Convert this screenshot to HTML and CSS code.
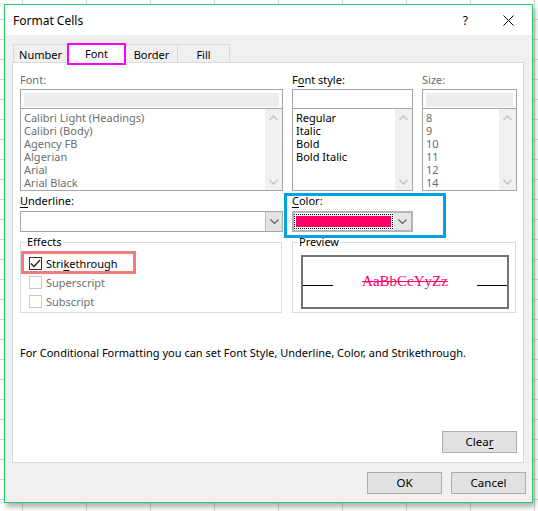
FILE: index.html
```html
<!DOCTYPE html>
<html>
<head>
<meta charset="utf-8">
<title>Format Cells</title>
<link rel="stylesheet" href="styles.css">
</head>
<body>
<div class="dialog">
  <div class="titlebar">
    <span class="title">Format Cells</span>
    <span class="help">?</span>
    <svg class="close" width="11" height="11" viewBox="0 0 11 11"><path d="M0.5 0.5 L10.5 10.5 M10.5 0.5 L0.5 10.5" stroke="#000" stroke-width="1" fill="none"/></svg>
  </div>
  <div class="tabs">
    <div class="tab tab-number">Number</div>
    <div class="tab tab-font active">Font</div>
    <div class="tab tab-border">Border</div>
    <div class="tab tab-fill">Fill</div>
  </div>
  <div class="panel">
    <div class="topgrid">
      <div class="col">
        <div class="label dis">Font:</div>
        <div class="edit dis"><div class="edit-fill"></div></div>
        <div class="list">
          <div class="items dis">
            <div>Calibri Light (Headings)</div>
            <div>Calibri (Body)</div>
            <div>Agency FB</div>
            <div>Algerian</div>
            <div>Arial</div>
            <div>Arial Black</div>
          </div>
          <div class="sb">
            <div class="sb-btn"><svg width="9" height="6" viewBox="0 0 9 6"><polyline points="0.5,5 4.5,1 8.5,5" fill="none" stroke="#c4c4c4" stroke-width="1.3"/></svg></div>
            <div class="sb-btn"><svg width="9" height="6" viewBox="0 0 9 6"><polyline points="0.5,1 4.5,5 8.5,1" fill="none" stroke="#c4c4c4" stroke-width="1.3"/></svg></div>
          </div>
        </div>
      </div>
      <div class="col">
        <div class="label">F<u>o</u>nt style:</div>
        <div class="edit"></div>
        <div class="list">
          <div class="items">
            <div>Regular</div>
            <div>Italic</div>
            <div>Bold</div>
            <div>Bold Italic</div>
          </div>
          <div class="sb">
            <div class="sb-btn"><svg width="9" height="6" viewBox="0 0 9 6"><polyline points="0.5,5 4.5,1 8.5,5" fill="none" stroke="#c4c4c4" stroke-width="1.3"/></svg></div>
            <div class="sb-btn"><svg width="9" height="6" viewBox="0 0 9 6"><polyline points="0.5,1 4.5,5 8.5,1" fill="none" stroke="#c4c4c4" stroke-width="1.3"/></svg></div>
          </div>
        </div>
      </div>
      <div class="col">
        <div class="label dis">Size:</div>
        <div class="edit dis"><div class="edit-fill"></div></div>
        <div class="list">
          <div class="items dis">
            <div>8</div>
            <div>9</div>
            <div>10</div>
            <div>11</div>
            <div>12</div>
            <div>14</div>
          </div>
          <div class="sb">
            <div class="sb-btn"><svg width="9" height="6" viewBox="0 0 9 6"><polyline points="0.5,5 4.5,1 8.5,5" fill="none" stroke="#c4c4c4" stroke-width="1.3"/></svg></div>
            <div class="sb-btn"><svg width="9" height="6" viewBox="0 0 9 6"><polyline points="0.5,1 4.5,5 8.5,1" fill="none" stroke="#c4c4c4" stroke-width="1.3"/></svg></div>
          </div>
        </div>
      </div>
    </div>

    <div class="midgrid">
      <div class="col">
        <div class="label2"><u>U</u>nderline:</div>
        <div class="combo">
          <div class="combo-value"></div>
          <div class="combo-btn"><svg width="9" height="5" viewBox="0 0 9 5"><polyline points="0.5,0.5 4.5,4.5 8.5,0.5" fill="none" stroke="#606060" stroke-width="1.2"/></svg></div>
        </div>
      </div>
      <div class="col color-group">
        <div class="label2"><u>C</u>olor:</div>
        <div class="combo combo-color">
          <div class="combo-value"><div class="focus"><div class="swatch"></div></div></div>
          <div class="combo-btn"><svg width="9" height="5" viewBox="0 0 9 5"><polyline points="0.5,0.5 4.5,4.5 8.5,0.5" fill="none" stroke="#606060" stroke-width="1.2"/></svg></div>
        </div>
      </div>
    </div>

    <div class="groupgrid">
      <fieldset class="group effects">
        <legend>Effects</legend>
        <div class="check strike">
          <span class="box checked"><svg width="11" height="11" viewBox="0 0 11 11"><polyline points="1,5.5 4,8.5 10,2" fill="none" stroke="#222" stroke-width="1.3"/></svg></span>
          <span class="check-label">Stri<u>k</u>ethrough</span>
        </div>
        <div class="check dis">
          <span class="box"></span>
          <span class="check-label">Superscript</span>
        </div>
        <div class="check dis">
          <span class="box"></span>
          <span class="check-label">Subscript</span>
        </div>
      </fieldset>
      <fieldset class="group preview">
        <legend>Preview</legend>
        <div class="pv-box">
          <div class="pv-line"></div>
          <span class="pv-text">AaBbCcYyZz</span>
          <div class="pv-line"></div>
        </div>
      </fieldset>
    </div>

    <p class="note">For Conditional Formatting you can set Font Style, Underline, Color, and Strikethrough.</p>

    <button class="btn btn-clear">Clea<u>r</u></button>
  </div>
  <div class="footer">
    <button class="btn">OK</button>
    <button class="btn">Cancel</button>
  </div>
</div>
</body>
</html>
```

FILE: styles.css
```css
*, *::before, *::after { box-sizing: border-box; }
html, body { margin: 0; height: 100%; }
body {
  background-color: #ffffff;
  background-image:
    linear-gradient(#d6d6d6 1px, transparent 1px),
    linear-gradient(90deg, #d6d6d6 1px, transparent 1px);
  background-size: 64px 20px;
  background-position: 22px 19px;
  font-family: "Noto Sans", "Open Sans", sans-serif;
  font-size: 11px;
  color: #000;
  padding: 4px 0 0 4px;
  overflow: hidden;
}

.dialog {
  width: 529px;
  height: 499px;
  border: 1px solid #21cc6a;
  background: #f0f0f0;
  box-shadow: 2px 4px 5px rgba(0, 0, 0, 0.3);
  display: flex;
  flex-direction: column;
}

.titlebar {
  height: 30px;
  flex: none;
  background: #fff;
  display: flex;
  align-items: center;
  padding: 1px 18px 0 8px;
}
.title { flex: 1; font-size: 12px; }
.help { margin-right: 35px; font-size: 12px; }
.close { display: block; }

.tabs {
  display: flex;
  height: 18px;
  margin: 9px 0 0 8px;
  flex: none;
}
.tab {
  height: 18px;
  border: 1px solid #d9d9d9;
  border-bottom: none;
  background: #f0f0f0;
  text-align: center;
  padding-top: 2px;
  line-height: 15px;
  margin-left: -1px;
}
.tab-number { width: 55px; margin-left: 0; }
.tab-font {
  width: 59px;
  height: 22px;
  margin-top: -1px;
  border: 2px solid #ff00ff;
  background: #fff;
  padding-top: 1px;
  position: relative;
  z-index: 2;
}
.tab-border { width: 53px; }
.tab-fill { width: 53px; }

.panel {
  flex: none;
  margin-left: 7px;
  width: 512px;
  height: 401px;
  border: 1px solid #d9d9d9;
  background: #fff;
  padding: 9px 6px 9px 7px;
  display: flex;
  flex-direction: column;
}

.topgrid, .midgrid {
  display: grid;
  grid-template-columns: 263px 121px 95px;
  column-gap: 9px;
}
.col { display: flex; flex-direction: column; }

.label { height: 17px; line-height: 16px; }
.dis { color: #6d6d6d; }
u { text-decoration-thickness: 1px; text-underline-offset: 2px; }

.edit {
  height: 20px;
  border: 1px solid #a5a5a5;
  background: #fff;
}
.edit.dis { padding: 3px 3px 1px 3px; }
.edit-fill { height: 100%; background: #ededed; }

.list {
  height: 83px;
  margin-top: -1px;
  border: 1px solid #a5a5a5;
  background: #fff;
  display: flex;
}
.items {
  flex: 1;
  padding: 2px 3px 0 3px;
  line-height: 13px;
  overflow: hidden;
  white-space: nowrap;
}
.sb {
  width: 17px;
  background: #f0f0f0;
  display: flex;
  flex-direction: column;
  justify-content: space-between;
}
.sb-btn {
  height: 17px;
  display: flex;
  align-items: center;
  justify-content: center;
}
.sb-btn svg { display: block; }

.midgrid { margin-top: 2px; }
.label2 { height: 18px; line-height: 16px; }
.combo {
  height: 21px;
  border: 1px solid #a5a5a5;
  background: #fff;
  display: flex;
}
.combo-value { flex: 1; }
.combo-btn {
  width: 17px;
  background: #e3e3e3;
  border-left: 1px solid #b9b9b9;
  display: flex;
  align-items: center;
  justify-content: center;
}
.combo-btn svg { display: block; }

.combo-color { border: 2px solid #b4b4b4; }
.combo-color .combo-value { padding: 1px 1px 1px 0; }
.focus {
  height: 100%;
  border: 1px dotted #000;
  padding: 1px;
}
.swatch { height: 100%; background: #ff0066; }
.combo-color .combo-btn { border-left: none; background: #e6e6e6; }

.color-group { position: relative; }
.color-group::after {
  content: "";
  position: absolute;
  left: -8px;
  top: 0;
  width: 162px;
  height: 45px;
  border: 3px solid #00a2e8;
  pointer-events: none;
}

.groupgrid {
  margin-top: 3px;
  display: grid;
  grid-template-columns: 262px 224px;
  column-gap: 10px;
}
.group {
  margin: 0;
  min-width: 0;
  height: 78px;
  border: 1px solid #dcdcdc;
}
.group legend {
  font-size: 11px;
  line-height: 14px;
  padding: 0 1px;
  margin-left: -3px;
}
.effects { padding: 5px 0 0 8px; }
.check {
  display: flex;
  align-items: center;
  height: 19px;
}
.box {
  width: 13px;
  height: 13px;
  border: 1px solid #333;
  background: #fff;
  display: flex;
  align-items: center;
  justify-content: center;
  flex: none;
}
.box svg { display: block; }
.check.dis .box { border-color: #c8c8c8; }
.check-label { margin-left: 4px; }
.strike { position: relative; }
.strike::after {
  content: "";
  position: absolute;
  left: -8px;
  top: -3px;
  width: 115px;
  height: 23px;
  border: 3px solid #f27c7c;
  pointer-events: none;
}

.preview { padding: 6px 0 0 8px; }
.pv-box {
  width: 208px;
  height: 54px;
  border: 2px solid #737373;
  display: flex;
  align-items: baseline;
  justify-content: space-between;
  padding-top: 16px;
}
.pv-line { width: 30px; height: 1px; background: #000; }
.pv-text {
  font-family: "Liberation Serif", "Times New Roman", serif;
  font-size: 15px;
  line-height: 17px;
  color: #ff0066;
  text-decoration: line-through;
}

.note {
  margin: 32px 0 0 0;
  line-height: 16px;
  white-space: nowrap;
}

.btn {
  width: 75px;
  height: 22px;
  border: 1px solid #adadad;
  background: #e1e1e1;
  font-family: "Noto Sans", "Open Sans", sans-serif;
  font-size: 11.5px;
  color: #000;
  padding: 0;
  line-height: 18px;
}
.btn-clear { margin-top: auto; align-self: flex-end; }

.footer {
  display: flex;
  justify-content: flex-end;
  gap: 9px;
  padding: 9px 6px 0 0;
}
```
